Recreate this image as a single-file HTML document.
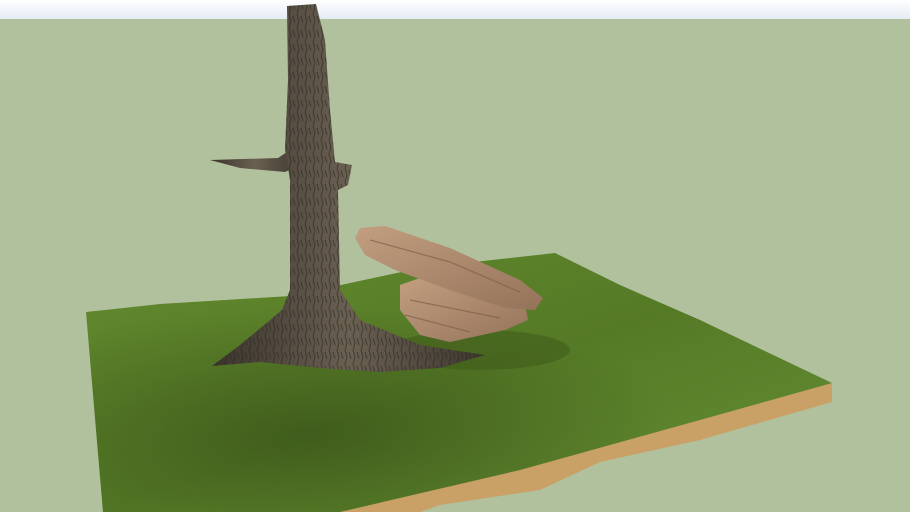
<!DOCTYPE html>
<html><head><meta charset="utf-8"><style>
html,body{margin:0;padding:0;width:910px;height:512px;overflow:hidden;background:#b2c19d}
svg{display:block}
</style></head><body>
<svg width="910" height="512" viewBox="0 0 910 512">
<defs>
<linearGradient id="sky" x1="0" y1="0" x2="0" y2="1"><stop offset="0" stop-color="#ffffff"/><stop offset="1" stop-color="#e4ecf3"/></linearGradient>
<linearGradient id="grass" x1="0" y1="0" x2="1" y2="1"><stop offset="0" stop-color="#628a2e"/><stop offset="0.5" stop-color="#557a26"/><stop offset="1" stop-color="#659034"/></linearGradient>
<radialGradient id="shade" cx="0.3" cy="0.7" r="0.5"><stop offset="0" stop-color="#2c4012" stop-opacity="0.5"/><stop offset="1" stop-color="#2c4012" stop-opacity="0"/></radialGradient>
<linearGradient id="bark" x1="0" y1="0" x2="1" y2="0"><stop offset="0" stop-color="#3a342c"/><stop offset="0.5" stop-color="#6a6052"/><stop offset="1" stop-color="#3e382f"/></linearGradient>
<linearGradient id="rock" x1="0" y1="0" x2="1" y2="1"><stop offset="0" stop-color="#c39e80"/><stop offset="1" stop-color="#94735a"/></linearGradient>
<pattern id="barkp" width="8" height="14" patternUnits="userSpaceOnUse"><rect width="8" height="14" fill="none"/><path d="M1 0 L3 7 L1 14 M5 2 L7 9" stroke="#2a251f" stroke-width="1" fill="none" opacity="0.6"/></pattern>
</defs>
<rect x="0" y="0" width="910" height="19" fill="url(#sky)"/>
<path d="M832,383 L832,402 L700,440 L600,462 L540,490 L440,505 L420,512 L340,512 Z" fill="#c9a066"/>
<path d="M86,312 L160,304 L290,296 L420,268 L555,253 L620,285 L700,320 L832,383 L700,420 L520,470 L340,512 L103,512 Z" fill="url(#grass)"/>
<path d="M86,312 L160,304 L290,296 L420,268 L555,253 L620,285 L700,320 L832,383 L700,420 L520,470 L340,512 L103,512 Z" fill="url(#shade)"/>
<ellipse cx="480" cy="350" rx="90" ry="20" fill="#3c5518" opacity="0.45"/>
<path d="M210,160 L278,158 L290,150 L300,165 L285,172 L240,168 Z" fill="url(#bark)"/>
<path d="M287,6 L316,4 L325,40 L330,110 L335,162 L352,165 L348,185 L338,190 L340,290 L360,320 L420,345 L485,355 L440,368 L380,372 L320,368 L260,362 L212,366 L240,345 L282,310 L290,290 L290,180 L285,150 L288,80 Z" fill="url(#bark)"/>
<path d="M287,6 L316,4 L325,40 L330,110 L335,162 L352,165 L348,185 L338,190 L340,290 L360,320 L420,345 L485,355 L440,368 L380,372 L320,368 L260,362 L212,366 L240,345 L282,310 L290,290 L290,180 L285,150 L288,80 Z" fill="url(#barkp)"/>
<path d="M400,285 L420,278 L480,285 L525,305 L528,320 L505,330 L450,342 L420,335 L400,310 Z" fill="url(#rock)"/>
<path d="M360,228 L385,226 L450,248 L520,280 L543,298 L535,310 L505,308 L450,290 L395,270 L365,255 L355,238 Z" fill="url(#rock)"/>
<path d="M370,240 L450,262 L520,292 M410,300 L500,318 M405,315 L470,332" stroke="#7e5f48" stroke-width="1.2" fill="none" opacity="0.7"/>
</svg>
</body></html>
